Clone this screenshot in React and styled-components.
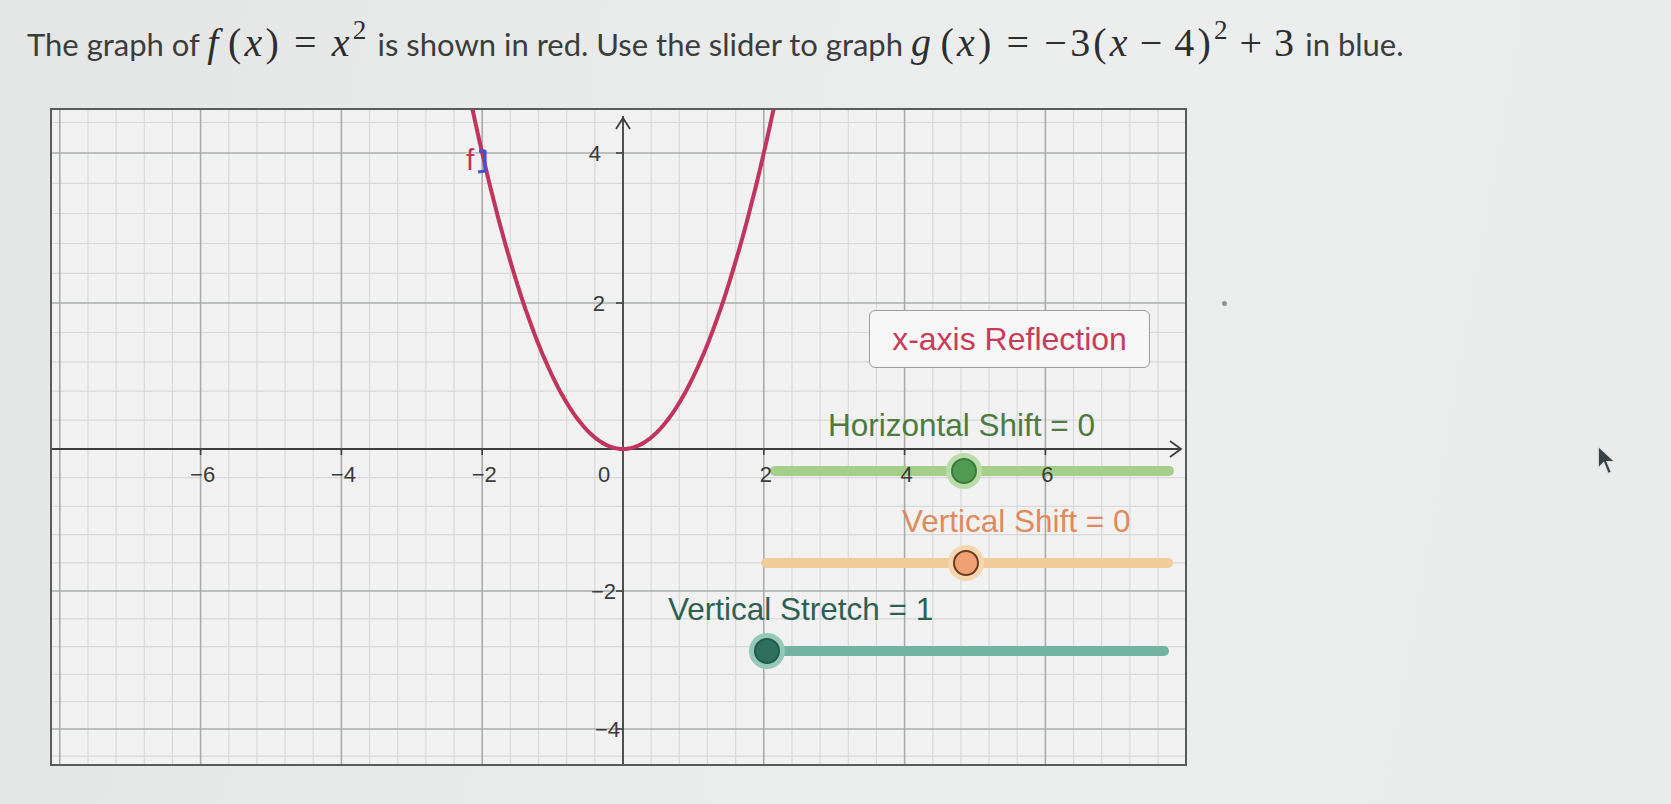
import React from "react";
import styled, { createGlobalStyle } from "styled-components";

const W = 1133;
const H = 654;
const OX = 571;
const OY = 339;
const UX = 70.4;
// the photo's vertical scale shrinks a little towards the bottom
const px = (x) => OX + x * UX;
const py = (y) => OY - 72 * y - 0.5 * y * y;

const X_LABELS = [-6, -4, -2, 2, 4, 6];
const Y_LABELS = [
  { v: 4, right: 549 },
  { v: 2, right: 553 },
  { v: -2, right: 564 },
  { v: -4, right: 568 },
];
const fmt = (n) => (n < 0 ? "\u2212" + -n : String(n));

function GridLayer() {
  const vLines = [];
  for (let k = -21; k <= 20; k++) {
    const x = px(k * 0.4);
    if (k === 0 || x <= 0 || x >= W) continue;
    vLines.push({ x, major: k % 5 === 0 });
  }
  const hLines = [];
  for (let k = -11; k <= 12; k++) {
    const y = py(k * 0.4);
    if (k === 0 || y <= 0 || y >= H) continue;
    hLines.push({ y, major: k % 5 === 0 });
  }
  const pts = [];
  for (let x = -2.3; x <= 2.3001; x += 0.02) {
    pts.push(`${px(x).toFixed(1)},${py(x * x).toFixed(1)}`);
  }
  const minor = (l) => !l.major;
  const major = (l) => l.major;

  return (
    <Svg width={W} height={H} viewBox={`0 0 ${W} ${H}`}>
      <defs>
        <clipPath id="box">
          <rect x="0" y="0" width={W} height={H} />
        </clipPath>
      </defs>
      {vLines.filter(minor).map((l) => (
        <line key={"vm" + l.x} x1={l.x} y1="0" x2={l.x} y2={H} stroke="#d6d9d7" strokeWidth="1.2" />
      ))}
      {hLines.filter(minor).map((l) => (
        <line key={"hm" + l.y} x1="0" y1={l.y} x2={W} y2={l.y} stroke="#d6d9d7" strokeWidth="1.2" />
      ))}
      {vLines.filter(major).map((l) => (
        <line key={"vM" + l.x} x1={l.x} y1="0" x2={l.x} y2={H} stroke="#a9acab" strokeWidth="1.6" />
      ))}
      {hLines.filter(major).map((l) => (
        <line key={"hM" + l.y} x1="0" y1={l.y} x2={W} y2={l.y} stroke="#a9acab" strokeWidth="1.6" />
      ))}

      <line x1="0" y1={OY} x2={W - 4} y2={OY} stroke="#3d3f3f" strokeWidth="1.8" />
      <line x1={OX} y1="6" x2={OX} y2={H} stroke="#3d3f3f" strokeWidth="1.8" />
      <path d={`M${OX - 7} 19 L${OX} 8 L${OX + 7} 19`} fill="none" stroke="#3d3f3f" strokeWidth="1.8" />
      <path
        d={`M${W - 15} ${OY - 8} L${W - 4} ${OY} L${W - 15} ${OY + 8}`}
        fill="none"
        stroke="#3d3f3f"
        strokeWidth="1.8"
      />
      {X_LABELS.map((n) => (
        <line key={"xt" + n} x1={px(n)} y1={OY} x2={px(n)} y2={OY + 6} stroke="#3d3f3f" strokeWidth="1.6" />
      ))}
      {Y_LABELS.map(({ v }) => (
        <line key={"yt" + v} x1={OX - 7} y1={py(v)} x2={OX} y2={py(v)} stroke="#3d3f3f" strokeWidth="1.6" />
      ))}
      {Y_LABELS.map(({ v, right }) => (
        <AxisText key={"yl" + v} x={right} y={py(v) + 8} textAnchor="end">
          {fmt(v)}
        </AxisText>
      ))}

      <polyline points={pts.join(" ")} fill="none" stroke="#c0345e" strokeWidth="4" clipPath="url(#box)" />
      <CurveLabel x="414" y="60">
        f
      </CurveLabel>
      <path d="M427 41 L433 41 L433 61 L426 62" fill="none" stroke="#4b4fd0" strokeWidth="3.2" strokeLinejoin="round" />
    </Svg>
  );
}

// x-axis numbers sit on top of the slider tracks, so they get their own layer
function AxisLabelLayer() {
  return (
    <LabelLayer width={W} height={H} viewBox={`0 0 ${W} ${H}`}>
      {X_LABELS.map((n) => (
        <AxisText key={"xl" + n} x={px(n) + 2} y={OY + 33} textAnchor="middle">
          {fmt(n)}
        </AxisText>
      ))}
      <AxisText x={OX - 19} y={OY + 33} textAnchor="middle">
        0
      </AxisText>
    </LabelLayer>
  );
}

function Slider({ left, width, top, value, track, fill, ring, halo }) {
  return (
    <SliderTrack $left={left} $width={width} $top={top} $color={track}>
      <Knob $halo={halo} $fill={fill} $ring={ring} style={{ left: value }} />
    </SliderTrack>
  );
}

export default function App() {
  return (
    <>
      <GlobalStyle />
      <Page>
        <Title>
          The graph of{" "}
          <MathExpr>
            <Var>f</Var>
            <Paren>(</Paren>
            <Var>x</Var>)<Rel>=</Rel>
            <Var>x</Var>
            <Sup>2</Sup>
          </MathExpr>{" "}
          is shown in red. Use the slider to graph{" "}
          <MathExpr>
            <Var>g</Var>
            <Paren>(</Paren>
            <Var>x</Var>)<Rel>=</Rel>
            {"\u2212"}3(<Var>x</Var>
            <Bin>{"\u2212"}</Bin>4)
            <Sup>2</Sup>
            <Bin>+</Bin>3
          </MathExpr>{" "}
          in blue.
        </Title>
        <Graph>
          <GridLayer />
          <ReflectButton>x-axis Reflection</ReflectButton>
          <SliderLabel $left={776} $top={294} $color="#4c7a3f">
            Horizontal Shift = 0
          </SliderLabel>
          <Slider left={718} width={404} top={361} value={194} track="#a5cf88" fill="#4f9b52" ring="#3c7a3e" halo="#b9dcaa" />
          <SliderLabel $left={850} $top={390} $color="#e08a5c">
            Vertical Shift = 0
          </SliderLabel>
          <Slider left={709} width={412} top={453} value={205} track="#f1cc98" fill="#f0a174" ring="#6b3c1f" halo="#f6d6ae" />
          <SliderLabel $left={616} $top={478} $color="#2f5f52">
            Vertical Stretch = 1
          </SliderLabel>
          <Slider left={715} width={402} top={541} value={0} track="#72b2a1" fill="#2f6f60" ring="#245a4d" halo="#94c9b9" />
          <AxisLabelLayer />
        </Graph>
        <Dot />
        <Cursor viewBox="0 0 20 30" width="22" height="33">
          <path d="M2 2 L2 22 L7 17 L11 27 L14 25.5 L10 16 L17 16 Z" fill="#3a4148" stroke="#dfe3e3" strokeWidth="1.2" />
        </Cursor>
      </Page>
    </>
  );
}

const GlobalStyle = createGlobalStyle`
  body {
    margin: 0;
    background: #e7e9e8;
    font-family: Lato, "Open Sans", sans-serif;
  }
`;

const Page = styled.div`
  position: relative;
  width: 1671px;
  height: 804px;
  overflow: hidden;
  display: flex;
  flex-direction: column;
  align-items: flex-start;
  gap: 43px;
  padding: 21px 0 0 27px;
  box-sizing: border-box;
  background: linear-gradient(100deg, #e4e6e5 0%, #eceeed 60%, #e9ebea 100%);
`;

const Title = styled.div`
  font-family: Lato, "Open Sans", sans-serif;
  font-size: 31px;
  line-height: 44px;
  height: 44px;
  color: #3b3c3c;
  white-space: nowrap;
`;

const MathExpr = styled.span`
  font-family: "Liberation Serif", "DejaVu Serif", serif;
  font-size: 40px;
  letter-spacing: 0.08em;
  color: #2c2d2d;
`;

const Var = styled.i`
  font-style: italic;
`;

const Paren = styled.span`
  margin-left: 0.16em;
`;

const Rel = styled.span`
  margin: 0 0.3em;
`;

const Bin = styled.span`
  margin: 0 0.22em;
`;

const Sup = styled.sup`
  font-size: 0.68em;
  vertical-align: 0.62em;
  line-height: 0;
`;

const Graph = styled.div`
  position: relative;
  width: ${W}px;
  height: ${H}px;
  margin-left: 23px;
  border: 2px solid #595b5b;
  box-sizing: content-box;
  background: #f0f1f0;
`;

const Svg = styled.svg`
  display: block;
`;

const LabelLayer = styled.svg`
  position: absolute;
  inset: 0;
  pointer-events: none;
`;

const AxisText = styled.text`
  font-family: "Liberation Sans", Arial, sans-serif;
  font-size: 22px;
  fill: #3a3b3b;
`;

const CurveLabel = styled.text`
  font-family: "Liberation Sans", Arial, sans-serif;
  font-size: 30px;
  fill: #c0345e;
  stroke: #f4f4f4;
  stroke-width: 1.5;
  paint-order: stroke;
`;

const ReflectButton = styled.div`
  position: absolute;
  left: 817px;
  top: 200px;
  width: 281px;
  height: 58px;
  box-sizing: border-box;
  border: 1.5px solid #9c9e9e;
  border-radius: 6px;
  background: #f5f6f5;
  display: flex;
  align-items: center;
  justify-content: center;
  font-family: "Liberation Sans", Arial, sans-serif;
  font-size: 32px;
  color: #c93b59;
`;

const SliderLabel = styled.div`
  position: absolute;
  left: ${(p) => p.$left}px;
  top: ${(p) => p.$top}px;
  font-family: "Liberation Sans", Arial, sans-serif;
  font-size: 31.5px;
  line-height: 42px;
  white-space: nowrap;
  color: ${(p) => p.$color};
`;

const SliderTrack = styled.div`
  position: absolute;
  left: ${(p) => p.$left}px;
  top: ${(p) => p.$top - 5}px;
  width: ${(p) => p.$width}px;
  height: 10px;
  border-radius: 5px;
  background: ${(p) => p.$color};
`;

const Knob = styled.div`
  position: absolute;
  top: 5px;
  width: 22px;
  height: 22px;
  margin: -13px 0 0 -13px;
  border-radius: 50%;
  background: ${(p) => p.$fill};
  border: 2px solid ${(p) => p.$ring};
  box-shadow: 0 0 0 5px ${(p) => p.$halo};
`;

const Dot = styled.div`
  position: absolute;
  left: 1222px;
  top: 301px;
  width: 5px;
  height: 5px;
  border-radius: 50%;
  background: #8e9291;
`;

const Cursor = styled.svg`
  position: absolute;
  left: 1596px;
  top: 444px;
`;
